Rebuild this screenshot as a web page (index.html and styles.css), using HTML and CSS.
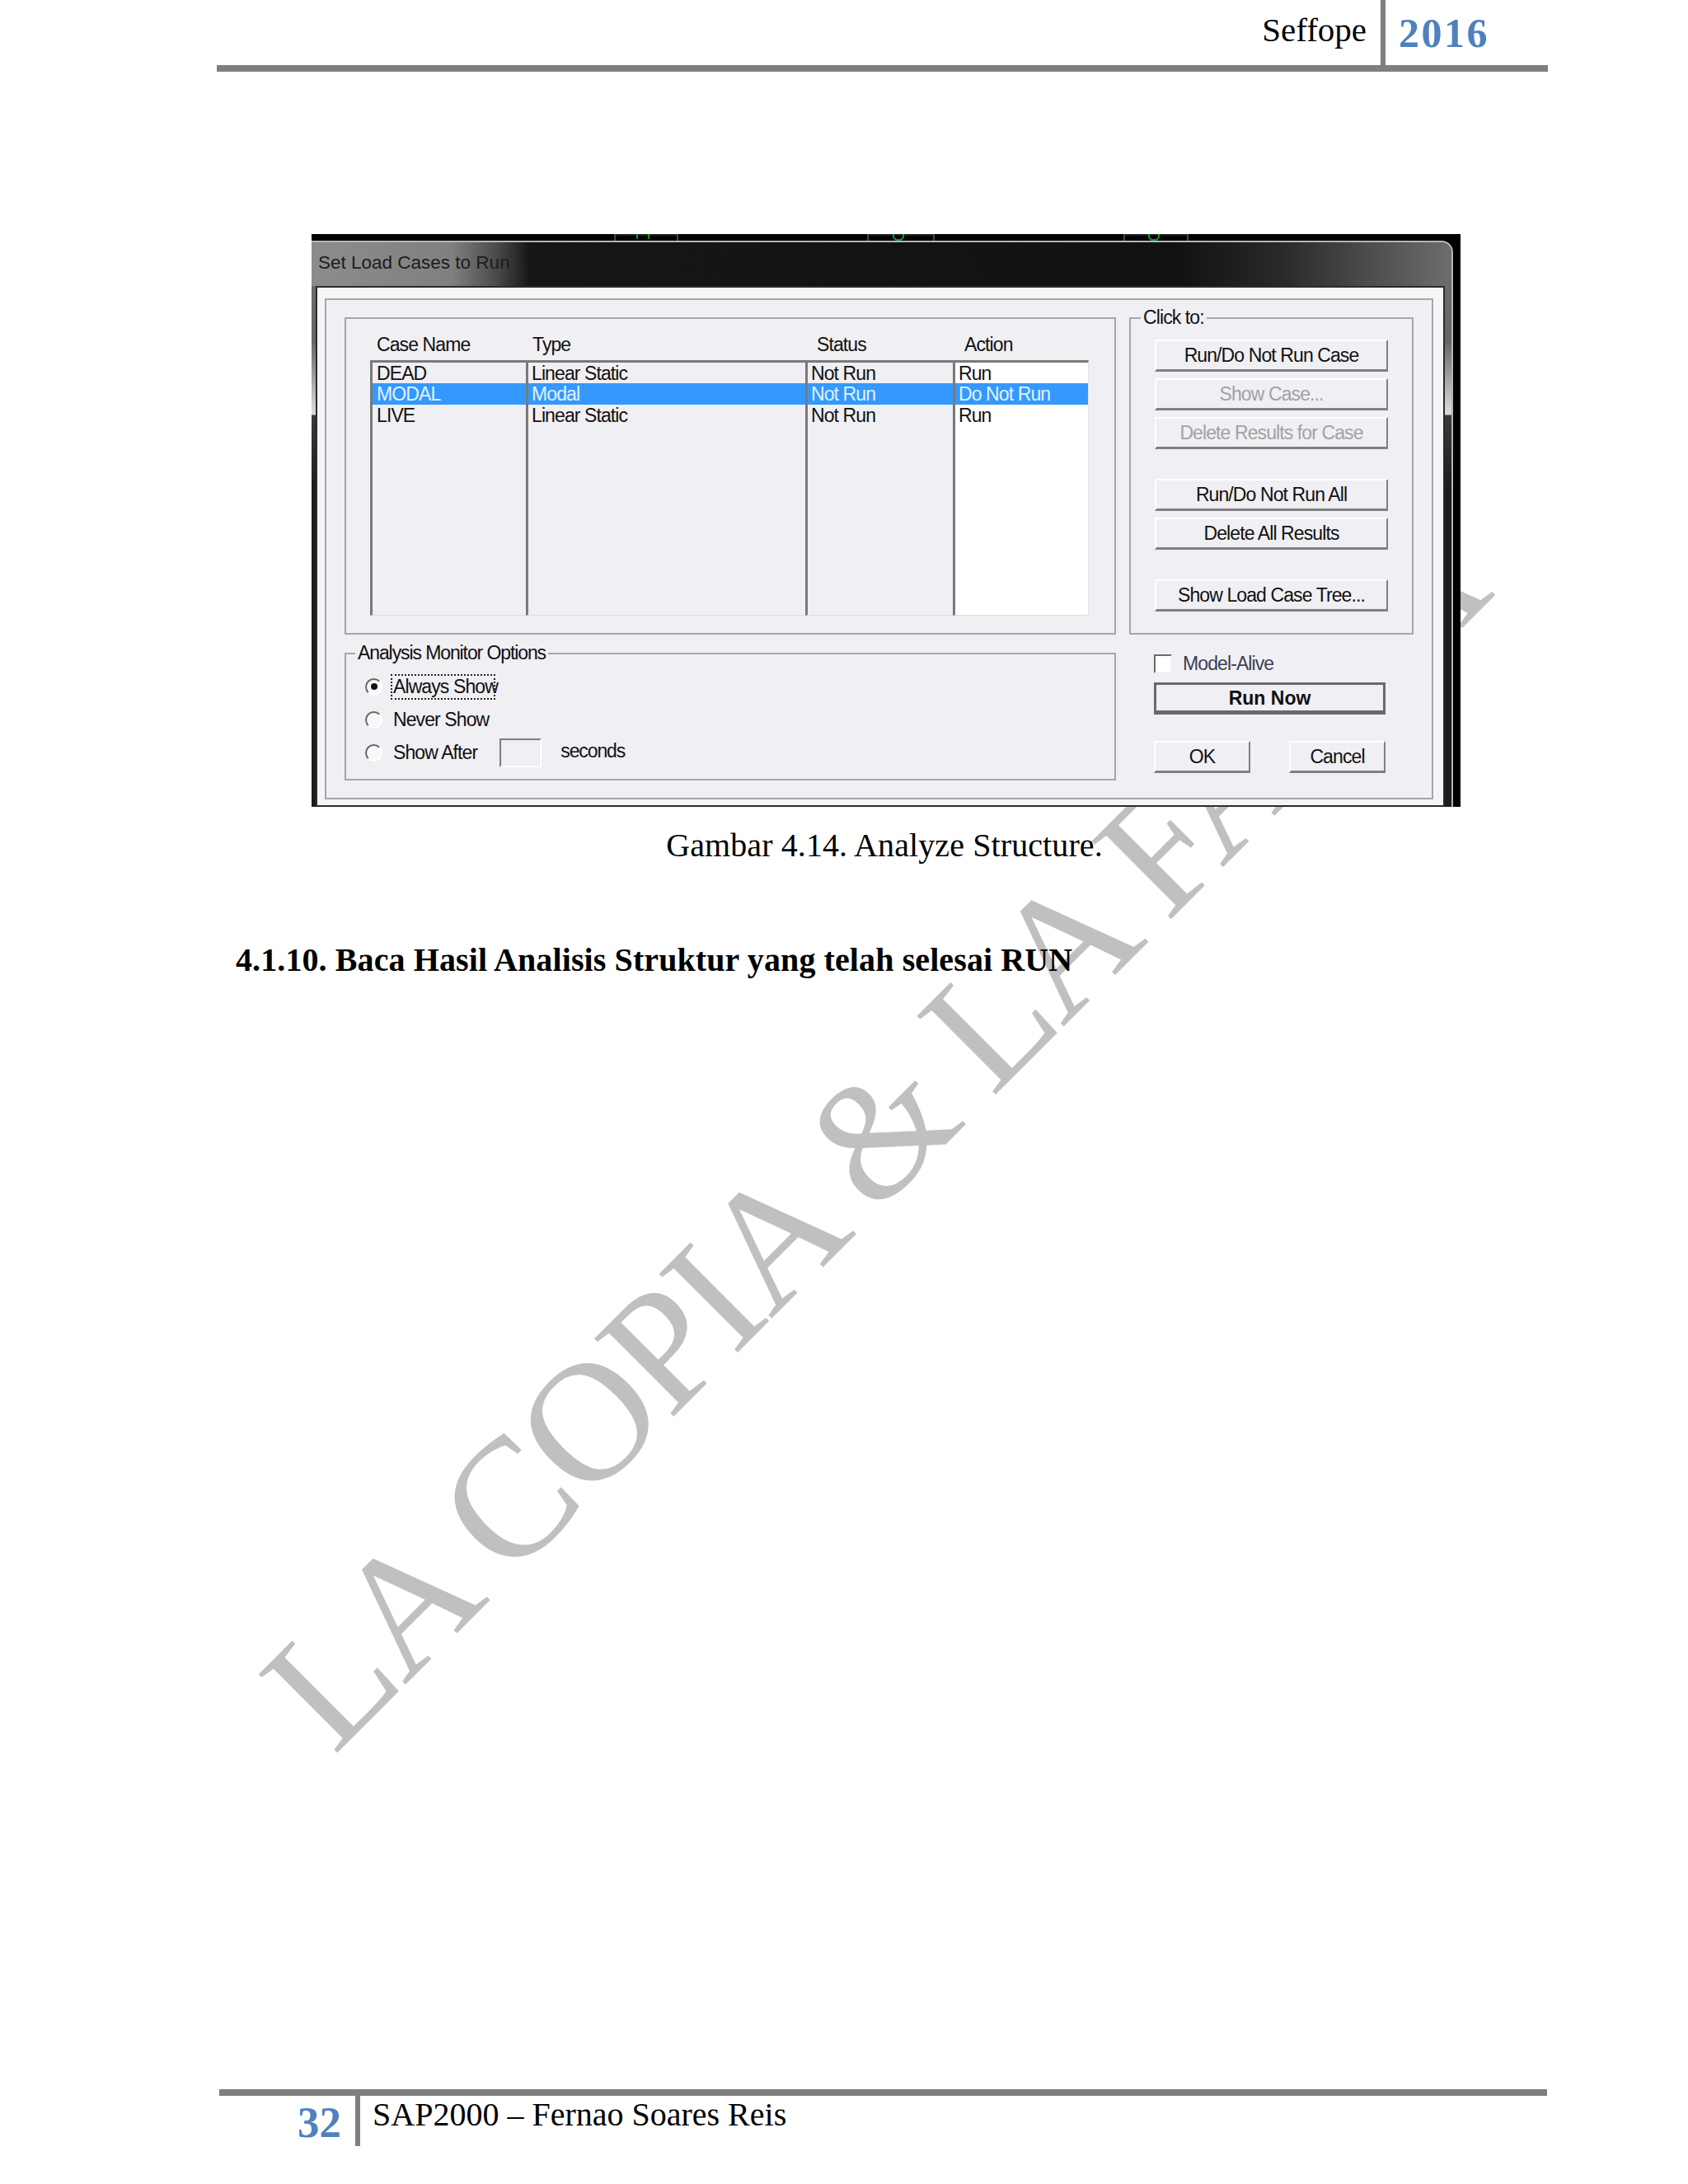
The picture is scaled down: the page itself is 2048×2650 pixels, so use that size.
FILE: index.html
```html
<!DOCTYPE html>
<html lang="id">
<head>
    <meta charset="UTF-8">
    <title>SAP2000 - Fernao Soares Reis</title>
    <link rel="stylesheet" href="styles.css">
</head>
<body>
    <div class="page">
        <!-- watermark, sits behind everything -->
        <div class="watermark">LA COPIA &amp; LA FAMA</div>

        <div class="page-header">
            <div class="header-name">Seffope</div>
            <div class="header-year">2016</div>
        </div>

        <!-- screenshot of the SAP2000 dialog -->
        <div class="shot">
            <svg class="shot-strip" width="1394" height="8" viewBox="0 0 1394 8">
                <g stroke="#8a8a8a" stroke-width="1" fill="none">
                    <path d="M368 0V8M444 0V8M675 0V8M755 0V8M986 0V8M1063 0V8"/>
                    <path d="M368 1H444M675 1H755M986 1H1063" stroke="#444"/>
                </g>
                <g stroke="#22b83a" stroke-width="1.5" fill="none">
                    <path d="M395 0V6M409 0V6"/>
                    <path d="M706 0V4L709 7H715L718 4V0"/>
                    <path d="M1016 0V4L1019 7H1025L1028 4V0"/>
                </g>
            </svg>
            <div class="window">
                <div class="titlebar">Set Load Cases to Run</div>
                <div class="client">
                    <div class="groove">
                        <!-- case list -->
                        <div class="group list-group">
                            <div class="list-head">
                                <div class="head-case">Case Name</div>
                                <div class="head-type">Type</div>
                                <div class="head-status">Status</div>
                                <div class="head-action">Action</div>
                            </div>
                            <div class="list-body">
                                <div class="lv-col col-case">
                                    <div class="cell">DEAD</div>
                                    <div class="cell selected">MODAL</div>
                                    <div class="cell">LIVE</div>
                                </div>
                                <div class="lv-col col-type">
                                    <div class="cell">Linear Static</div>
                                    <div class="cell selected">Modal</div>
                                    <div class="cell">Linear Static</div>
                                </div>
                                <div class="lv-col col-status">
                                    <div class="cell">Not Run</div>
                                    <div class="cell selected">Not Run</div>
                                    <div class="cell">Not Run</div>
                                </div>
                                <div class="lv-col col-action">
                                    <div class="cell">Run</div>
                                    <div class="cell selected">Do Not Run</div>
                                    <div class="cell">Run</div>
                                </div>
                            </div>
                        </div>

                        <!-- click to -->
                        <div class="group click-group">
                            <div class="group-title click-title">Click to:</div>
                            <button class="btn">Run/Do Not Run Case</button>
                            <button class="btn disabled">Show Case...</button>
                            <button class="btn disabled">Delete Results for Case</button>
                            <button class="btn spaced">Run/Do Not Run All</button>
                            <button class="btn">Delete All Results</button>
                            <button class="btn spaced">Show Load Case Tree...</button>
                        </div>

                        <!-- monitor options -->
                        <div class="group monitor-group">
                            <div class="group-title monitor-title">Analysis Monitor Options</div>
                            <div class="radio-row">
                                <span class="radio checked"></span>
                                <span class="focus-label">Always Show</span>
                            </div>
                            <div class="radio-row">
                                <span class="radio"></span>
                                <span>Never Show</span>
                            </div>
                            <div class="radio-row">
                                <span class="radio"></span>
                                <span>Show After</span>
                                <span class="seconds-box"></span>
                                <span class="seconds-label">seconds</span>
                            </div>
                        </div>

                        <div class="run-panel">
                            <div class="check-row">
                                <span class="checkbox"></span>
                                <span class="check-label">Model-Alive</span>
                            </div>
                            <button class="btn btn-default">Run Now</button>
                            <div class="ok-row">
                                <button class="btn">OK</button>
                                <button class="btn">Cancel</button>
                            </div>
                        </div>
                    </div>
                </div>
            </div>
        </div>

        <p class="caption">Gambar 4.14. Analyze Structure.</p>
        <h3 class="section-title">4.1.10. Baca Hasil Analisis Struktur yang telah selesai RUN</h3>

        <div class="page-footer">
            <div class="footer-num">32</div>
            <div class="footer-text">SAP2000 – Fernao Soares Reis</div>
        </div>
    </div>
</body>
</html>
```

FILE: styles.css
```css
/* page */
* {
    box-sizing: border-box;
}

html, body {
    margin: 0;
    background-color: #fff;
}

body {
    font-family: "Liberation Serif", "Times New Roman", serif;
    color: #000;
}

.page {
    position: relative;
    z-index: 0;
    width: 2048px;
    height: 2650px;
    padding: 0 170px 46px 263px;
    display: flex;
    flex-direction: column;
    overflow: hidden;
}

.watermark {
    position: absolute;
    z-index: -1;
    left: 405px;
    top: 1959px;
    font-size: 206px;
    line-height: 206px;
    letter-spacing: -5px;
    color: #c0bfc2;
    white-space: nowrap;
    transform-origin: 0 172px;
    transform: rotate(-45deg);
}

/* header */
.page-header {
    display: flex;
    justify-content: flex-end;
    height: 87px;
    flex-shrink: 0;
    border-bottom: 8px solid #7f7f7f;
    padding-right: 71px;
}

.header-name {
    font-size: 41px;
    line-height: 40px;
    padding: 16px 17px 0 0;
}

.header-year {
    font-size: 50px;
    line-height: 50px;
    font-weight: bold;
    letter-spacing: 2.5px;
    color: #4f81bd;
    border-left: 6px solid #7f7f7f;
    padding: 15px 0 0 16px;
}

/* dialog screenshot */
.shot {
    width: 1394px;
    margin: 197px 0 0 115px;
    padding-right: 9px;
    background-color: #000;
    flex-shrink: 0;
    font-family: "Liberation Sans", Arial, sans-serif;
    font-size: 23px;
    letter-spacing: -0.9px;
    color: #111;
}

.shot-strip {
    display: block;
}

.window {
    border-top: 2px solid #b5b5b5;
    border-right: 2px solid #b5b5b5;
    border-top-right-radius: 14px;
    padding: 0 8px 0 5px;
    background: linear-gradient(180deg, #6f6f6f 0, #666 120px, #d8d8d8 205px, #d8d8d8 209px, #3a3a3a 210px, #1c1c1c 300px);
}

.titlebar {
    height: 53px;
    margin: 0 -8px 0 -5px;
    padding: 10px 0 0 8px;
    border-top-right-radius: 12px;
    font-size: 22.5px;
    line-height: 30px;
    letter-spacing: 0;
    color: #1b1b22;
    background: linear-gradient(90deg, #8c8c8c 0, #808080 170px, #4a4a4a 225px, #161616 265px, #111 1050px, #2a2a2a 1180px, #6e6e6e 1385px);
}

.client {
    border: 2px solid #2b2b2b;
    background-color: #f5f5f7;
}

.groove {
    margin: 13px 12px 7px 9px;
    padding: 21px 22px;
    border: 2px solid #a6a6a6;
    background-color: #f0eff3;
    display: grid;
    grid-template-columns: 936px 345px;
    grid-template-rows: 385px 155px;
    column-gap: 16px;
    row-gap: 22px;
}

.group {
    position: relative;
    border: 2px solid #a6a6a6;
}

.group-title {
    position: absolute;
    top: -15px;
    padding: 0 3px;
    line-height: 26px;
    background-color: #f0eff3;
}

/* case list */
.list-group {
    padding-left: 29px;
}

.list-head {
    display: grid;
    grid-template-columns: 189px 339px 179px 165px;
    height: 50px;
    padding-top: 18px;
    line-height: 26px;
}

.head-case, .head-type {
    padding-left: 8px;
}

.head-status, .head-action {
    padding-left: 14px;
}

.list-body {
    display: grid;
    grid-template-columns: 189px 339px 179px 165px;
    height: 310px;
}

.lv-col {
    border-left: 3px solid #7a7a7a;
    border-top: 3px solid #7a7a7a;
    border-bottom: 1px solid #dcdcdc;
}

.col-action {
    background-color: #fff;
    border-right: 1px solid #e4e4e4;
}

.cell {
    height: 25.4px;
    line-height: 27px;
    padding-left: 4px;
}

.col-case .cell {
    padding-left: 5px;
}

.cell.selected {
    background-color: #3399ff;
    color: #e4f1ff;
}

/* buttons */
.click-group {
    padding: 25px 29px 0;
    display: flex;
    flex-direction: column;
    gap: 8px;
}

.click-title {
    left: 12px;
}

.btn {
    height: 39px;
    padding: 0;
    background-color: #f0eff3;
    border-style: solid;
    border-width: 2px 2px 3px 2px;
    border-color: #fff #808080 #808080 #fff;
    font-family: inherit;
    font-size: inherit;
    letter-spacing: inherit;
    color: #111;
    flex-shrink: 0;
}

.btn.disabled {
    color: #a2a2a2;
}

.btn.spaced {
    margin-top: 28px;
}

.btn-default {
    width: 281px;
    margin-top: 11px;
    padding-top: 2px;
    border-width: 3px 3px 5px 3px;
    border-color: #6a6a6a;
    font-weight: bold;
    letter-spacing: 0;
}

/* monitor options */
.monitor-group {
    padding: 19px 0 0 23px;
}

.monitor-title {
    left: 11px;
    letter-spacing: -1.1px;
}

.radio-row {
    display: flex;
    align-items: center;
    height: 40px;
}

.radio {
    width: 21px;
    height: 21px;
    margin-right: 13px;
    flex-shrink: 0;
    border: 2px solid;
    border-color: #666 #fff #fff #666;
    border-radius: 50%;
    background-color: #f8f8f8;
    display: flex;
    align-items: center;
    justify-content: center;
}

.radio.checked::after {
    content: "";
    width: 8px;
    height: 8px;
    border-radius: 50%;
    background-color: #111;
}

.focus-label {
    width: 127px;
    height: 31px;
    margin-left: -3px;
    padding-left: 1px;
    border: 2px dotted #222;
    line-height: 27px;
    white-space: nowrap;
}

.seconds-box {
    width: 51px;
    height: 35px;
    margin-left: 27px;
    border: 2px solid;
    border-color: #808080 #fff #fff #808080;
    box-shadow: inset 0 0 0 1px #e6e6e8;
}

.seconds-label {
    margin: -4px 0 0 23px;
    letter-spacing: -1.1px;
}

/* model alive, run, ok */
.run-panel {
    padding: 2px 0 0 30px;
    display: flex;
    flex-direction: column;
    align-items: flex-start;
}

.check-row {
    display: flex;
    align-items: center;
    height: 23px;
}

.checkbox {
    width: 22px;
    height: 23px;
    margin-right: 13px;
    background-color: #fff;
    border: 2px solid;
    border-color: #6a6a6a #f0f0f0 #f0f0f0 #6a6a6a;
}

.check-label {
    color: #3c3f52;
}

.ok-row {
    width: 281px;
    margin-top: 32px;
    display: flex;
    justify-content: space-between;
}

.ok-row .btn {
    width: 117px;
}

/* text */
.caption {
    margin: 27px 0 0;
    padding-left: 5px;
    font-size: 40px;
    line-height: 40px;
    letter-spacing: 0.1px;
    text-align: center;
}

.section-title {
    margin: 99px 0 0 23px;
    font-size: 40px;
    line-height: 40px;
    font-weight: bold;
    letter-spacing: 0.1px;
}

/* footer */
.page-footer {
    margin: auto 1px 0 3px;
    display: flex;
    border-top: 8px solid #7f7f7f;
    height: 69px;
    flex-shrink: 0;
}

.footer-num {
    padding: 6px 17px 0 0;
    border-right: 6px solid #7f7f7f;
    box-sizing: content-box;
    width: 148px;
    text-align: right;
    font-size: 53px;
    line-height: 53px;
    font-weight: bold;
    color: #4f81bd;
}

.footer-text {
    padding: 3px 0 0 15px;
    font-size: 40px;
    line-height: 40px;
}
```
